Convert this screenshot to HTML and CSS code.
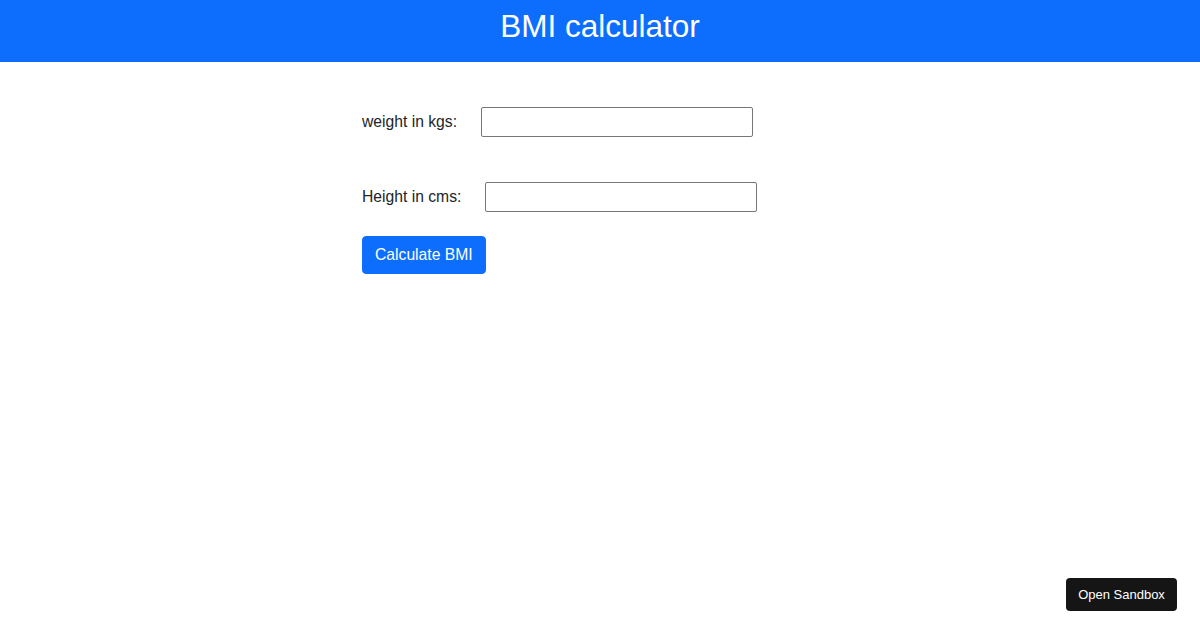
FILE: index.html
```html
<!DOCTYPE html>
<html>
<head>
<meta charset="utf-8">
<link rel="stylesheet" href="styles.css">
</head>
<body>
<header class="topbar">
  <h1 class="title">BMI calculator</h1>
</header>
<main class="wrap">
  <form class="form">
    <div class="row row-first">
      <label class="label">weight in kgs:</label>
      <input class="field" type="text">
    </div>
    <div class="row">
      <label class="label">Height in cms:</label>
      <input class="field" type="text">
    </div>
    <button type="button" class="btn">Calculate BMI</button>
  </form>
</main>
<button type="button" class="sandbox">Open Sandbox</button>
</body>
</html>
```
FILE: styles.css
```css
html, body {
  margin: 0;
  padding: 0;
}
body {
  font-family: "Liberation Sans", Arial, sans-serif;
  color: #212529;
  background: #fff;
  width: 1200px;
  height: 630px;
  position: relative;
  overflow: hidden;
}
.topbar {
  background: #0d6efd;
  height: 62px;
  display: flex;
  align-items: center;
  justify-content: center;
}
.title {
  margin: 0;
  color: #fff;
  font-weight: 400;
  font-size: 31.5px;
  line-height: 1.2;
  padding-bottom: 8px;
}
.wrap {
  display: flex;
  justify-content: center;
}
.form {
  width: 476px;
  padding-top: 45px;
  display: flex;
  flex-direction: column;
  align-items: flex-start;
}
.row {
  display: flex;
  align-items: center;
  gap: 24px;
  height: 30px;
  margin-bottom: 45px;
}
.row + .row {
  margin-bottom: 24px;
}
.label {
  font-size: 15.7px;
  line-height: 24px;
}
.field {
  box-sizing: border-box;
  width: 272px;
  height: 30px;
  border: 1px solid #767676;
  border-radius: 2px;
  padding: 1px 2px;
  margin: 0;
  font-size: 13px;
  background: #fff;
}
.btn {
  box-sizing: border-box;
  height: 38px;
  padding: 0 12px;
  background: #0d6efd;
  border: 1px solid #0d6efd;
  border-radius: 4px;
  color: #fff;
  font-family: "Liberation Sans", Arial, sans-serif;
  font-size: 15.7px;
  line-height: 24px;
  cursor: pointer;
}
.sandbox {
  position: absolute;
  left: 1066px;
  top: 578px;
  width: 111px;
  height: 33px;
  box-sizing: border-box;
  background: #151515;
  border: none;
  border-radius: 4px;
  color: #fff;
  font-family: "Liberation Sans", Arial, sans-serif;
  font-size: 13px;
  padding: 0;
}
```
